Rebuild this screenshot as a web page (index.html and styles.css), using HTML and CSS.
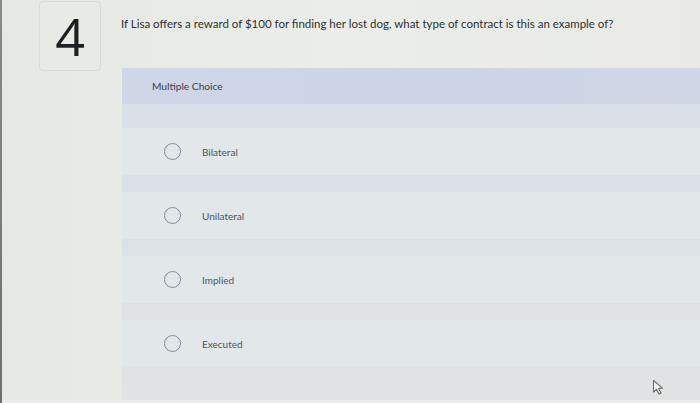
FILE: index.html
```html
<!DOCTYPE html>
<html>
<head>
<meta charset="utf-8">
<link rel="stylesheet" href="styles.css">
</head>
<body>
<div class="page">
  <div class="edge"></div>
  <div class="main">
    <div class="top">
      <div class="num">4</div>
      <p class="question">If Lisa offers a reward of $100 for finding her lost dog, what type of contract is this an example of?</p>
    </div>
    <div class="panel">
      <div class="panel-head">Multiple Choice</div>
      <div class="options">
        <div class="option"><span class="radio"></span><span class="label">Bilateral</span></div>
        <div class="option"><span class="radio"></span><span class="label">Unilateral</span></div>
        <div class="option"><span class="radio"></span><span class="label">Implied</span></div>
        <div class="option"><span class="radio"></span><span class="label">Executed</span></div>
      </div>
    </div>
    <div class="foot"></div>
  </div>
  <svg class="cursor" width="14" height="16" viewBox="0 0 14 16"><path d="M1.5 1.5 L1.5 13 L4.5 10.3 L7 15 L9 14 L6.6 9.4 L10.5 9.2 Z" fill="#f2f2f0" stroke="#6f706c" stroke-width="1.1" stroke-linejoin="round"/></svg>
</div>
</body>
</html>
```

FILE: styles.css
```css
html, body {
  margin: 0;
  padding: 0;
}
body {
  width: 700px;
  height: 403px;
  overflow: hidden;
  background: #e9ebe6;
  font-family: Lato, "Liberation Sans", sans-serif;
}
.page {
  position: relative;
  display: flex;
  width: 700px;
  height: 403px;
  background: linear-gradient(90deg, #e6e8e3 0%, #ebede8 50%, #e9eae6 100%);
}
.edge {
  width: 2px;
  flex: none;
  background: linear-gradient(180deg, #8a8b86, #6e6f6a);
}
.main {
  flex: 1;
  display: flex;
  flex-direction: column;
}
.top {
  display: flex;
  align-items: flex-start;
  height: 68px;
  padding-left: 37px;
}
.num {
  box-sizing: border-box;
  flex: none;
  width: 62px;
  height: 70px;
  margin-top: 1px;
  border: 1px solid #d9dbd6;
  border-radius: 4px;
  background: #e8eae5;
  display: flex;
  align-items: center;
  justify-content: center;
  font-family: "Open Sans", "Liberation Sans", sans-serif;
  font-size: 52px;
  font-weight: 400;
  color: #1e1f22;
  line-height: 1;
}
.question {
  margin: 17px 0 0 20px;
  font-size: 11.5px;
  color: #2e3035;
  white-space: nowrap;
}
.panel {
  margin-left: 120px;
  height: 332px;
  display: flex;
  flex-direction: column;
  background: linear-gradient(180deg, #d9dfe8 0%, #dce1e6 45%, #e0e3e3 100%);
}
.panel-head {
  height: 36px;
  display: flex;
  align-items: center;
  padding-left: 30px;
  background: linear-gradient(90deg, #cfd6e6 0%, #ccd4e6 60%, #d0d6e5 100%);
  font-size: 10.2px;
  color: #3a3f4d;
}
.options {
  display: flex;
  flex-direction: column;
  gap: 17px;
  padding-top: 24px;
}
.option {
  height: 47px;
  display: flex;
  align-items: center;
  padding-left: 42px;
  background: #e2e7ea;
}
.radio {
  box-sizing: border-box;
  width: 17px;
  height: 17px;
  border: 1.5px solid #7f8c99;
  border-radius: 50%;
  flex: none;
}
.label {
  margin-left: 21px;
  font-size: 10px;
  color: #4f545d;
}
.foot {
  flex: 1;
  background: #ecedea;
}
.cursor {
  position: absolute;
  left: 652px;
  top: 379px;
}
```
